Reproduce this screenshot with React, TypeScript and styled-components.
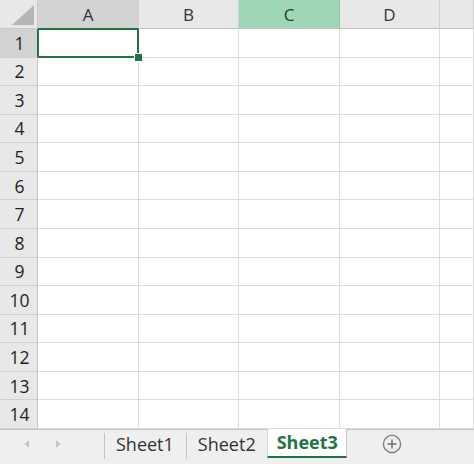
import React from "react";
import styled, { createGlobalStyle, css } from "styled-components";

const Global = createGlobalStyle`
  html, body { margin: 0; padding: 0; background: #ffffff; }
  body { font-family: "Open Sans", "Noto Sans", "DejaVu Sans", sans-serif; }
  * { box-sizing: border-box; }
`;

const GREEN = "#217346";

const Window = styled.div`
  width: 474px;
  height: 464px;
  display: flex;
  flex-direction: column;
  overflow: hidden;
  background: #fff;
`;

const Sheet = styled.div`
  display: grid;
  grid-template-columns: 38px 101px 100px 101px 100px 1fr;
  grid-template-rows: 29px repeat(14, 28.57px);
  flex: none;
`;

type HeadState = "normal" | "active" | "selected";

const headBg: Record<HeadState, string> = {
  normal: "#e8e8e8",
  active: "#d3d3d3",
  selected: "#9fd6b8",
};

const Corner = styled.div`
  background: #e8e8e8;
  border-right: 1px solid #c9c9c9;
  border-bottom: 1px solid #c9c9c9;
  display: flex;
  align-items: flex-end;
  justify-content: flex-end;
  padding: 0 3px 3px 0;
`;

const ColHead = styled.div<{ $state: HeadState }>`
  background: ${(p) => headBg[p.$state]};
  border-right: 1px solid ${(p) => (p.$state === "selected" ? "#8fc7a7" : "#d0d0d0")};
  border-bottom: 1px solid ${(p) => (p.$state === "active" ? GREEN : "#c4c4c4")};
  display: flex;
  align-items: center;
  justify-content: center;
  font-size: 17px;
  color: #333333;
  padding-top: 1px;
`;

const RowHead = styled.div<{ $state: HeadState }>`
  background: ${(p) => headBg[p.$state]};
  border-right: 1px solid ${(p) => (p.$state === "active" ? GREEN : "#c4c4c4")};
  border-bottom: 1px solid #d0d0d0;
  display: flex;
  align-items: center;
  justify-content: center;
  font-size: 17.5px;
  color: #222222;
  padding-left: 2px;
`;

const Cell = styled.div<{ $selected?: boolean }>`
  position: relative;
  border-right: 1px solid #dcdcdc;
  border-bottom: 1px solid #dcdcdc;
  ${(p) =>
    p.$selected &&
    css`
      box-shadow: inset 0 0 0 1px ${GREEN};
      border-color: ${GREEN};
      z-index: 1;
    `}
`;

const FillHandle = styled.span`
  position: absolute;
  right: -5px;
  bottom: -5px;
  width: 7px;
  height: 7px;
  background: ${GREEN};
  border: 1px solid #ffffff;
  box-sizing: content-box;
`;

const TabBar = styled.div`
  flex: 1;
  display: flex;
  align-items: flex-start;
  background: #efefef;
  border-top: 1px solid #c6c6c6;
`;

const Nav = styled.div`
  width: 104px;
  height: 28px;
  display: flex;
  align-items: center;
  padding-left: 23px;
  gap: 23px;
`;

const NavArrow = styled.svg`
  width: 8px;
  height: 10px;
`;

const Separator = styled.div`
  width: 1px;
  height: 26px;
  margin-top: 3px;
  background: #c4c4c4;
`;

const Tab = styled.div<{ $active?: boolean }>`
  height: 28px;
  display: flex;
  align-items: center;
  font-size: 18px;
  color: #333333;
  padding: 0 12px 0 11px;
  ${(p) =>
    p.$active &&
    css`
      background: #ffffff;
      color: ${GREEN};
      font-weight: 700;
      padding: 0 8px 0 9px;
      border-right: 1px solid #c4c4c4;
      border-left: 1px solid #d6d6d6;
      border-bottom: 2px solid ${GREEN};
      height: 29px;
      margin-top: -1px;
      margin-left: -1px;
    `}
`;

const AddButton = styled.div`
  margin-left: 35px;
  height: 28px;
  display: flex;
  align-items: center;
`;

const PlusIcon = () => (
  <svg width="20" height="20" viewBox="0 0 20 20">
    <circle cx="10" cy="10" r="8.6" fill="none" stroke="#7b7b7b" strokeWidth="1.3" />
    <path d="M10 5.6v8.8M5.6 10h8.8" stroke="#6b6b6b" strokeWidth="1.4" />
  </svg>
);

const columns: { label: string; state: HeadState }[] = [
  { label: "A", state: "active" },
  { label: "B", state: "normal" },
  { label: "C", state: "selected" },
  { label: "D", state: "normal" },
  { label: "", state: "normal" },
];

const rows = Array.from({ length: 14 }, (_, i) => i + 1);

export default function App() {
  return (
    <>
      <Global />
      <Window>
        <Sheet>
          <Corner>
            <svg width="22" height="20" viewBox="0 0 22 20">
              <polygon points="22,0 22,20 0,20" fill="#b5b5b5" />
            </svg>
          </Corner>
          {columns.map((c, i) => (
            <ColHead key={i} $state={c.state}>
              {c.label}
            </ColHead>
          ))}
          {rows.map((r) => (
            <React.Fragment key={r}>
              <RowHead $state={r === 1 ? "active" : "normal"}>{r}</RowHead>
              {columns.map((c, ci) => (
                <Cell key={ci} $selected={r === 1 && ci === 0}>
                  {r === 1 && ci === 0 && <FillHandle />}
                </Cell>
              ))}
            </React.Fragment>
          ))}
        </Sheet>
        <TabBar>
          <Nav>
            <NavArrow viewBox="0 0 8 10">
              <polygon points="6,1 6,9 1.5,5" fill="#c4c4c4" />
            </NavArrow>
            <NavArrow viewBox="0 0 8 10">
              <polygon points="2,1 2,9 6.5,5" fill="#c4c4c4" />
            </NavArrow>
          </Nav>
          <Separator />
          <Tab>Sheet1</Tab>
          <Separator />
          <Tab>Sheet2</Tab>
          <Tab $active>Sheet3</Tab>
          <AddButton>
            <PlusIcon />
          </AddButton>
        </TabBar>
      </Window>
    </>
  );
}
